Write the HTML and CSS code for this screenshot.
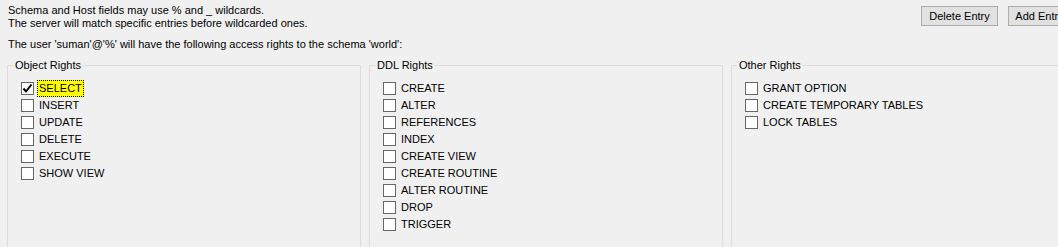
FILE: index.html
```html
<!DOCTYPE html>
<html lang="en">
<head>
  <meta charset="UTF-8">
  <title>Schema Privileges</title>
  <link rel="stylesheet" href="styles.css">
</head>
<body>
  <div class="page">
    <!-- Header: hints and entry buttons -->
    <div class="top">
      <div class="intro">
        <p class="hint">Schema and Host fields may use % and _ wildcards.<br>The server will match specific entries before wildcarded ones.</p>
        <p class="hint user-line">The user 'suman'@'%' will have the following access rights to the schema 'world':</p>
      </div>
      <div class="actions">
        <button class="btn">Delete Entry</button>
        <button class="btn btn-add">Add Entry</button>
      </div>
    </div>

    <!-- Rights groups -->
    <div class="groups">
      <fieldset class="group">
        <legend>Object Rights</legend>
        <ul class="rights">
          <li class="right"><span class="box checked"><svg width="11" height="11" viewBox="0 0 11 11"><path d="M1.5 5.5 L4 8.5 L9.5 1.5" fill="none" stroke="#000" stroke-width="2"/></svg></span><span class="label focused">SELECT</span></li>
          <li class="right"><span class="box"></span><span class="label">INSERT</span></li>
          <li class="right"><span class="box"></span><span class="label">UPDATE</span></li>
          <li class="right"><span class="box"></span><span class="label">DELETE</span></li>
          <li class="right"><span class="box"></span><span class="label">EXECUTE</span></li>
          <li class="right"><span class="box"></span><span class="label">SHOW VIEW</span></li>
        </ul>
      </fieldset>

      <fieldset class="group">
        <legend>DDL Rights</legend>
        <ul class="rights">
          <li class="right"><span class="box"></span><span class="label">CREATE</span></li>
          <li class="right"><span class="box"></span><span class="label">ALTER</span></li>
          <li class="right"><span class="box"></span><span class="label">REFERENCES</span></li>
          <li class="right"><span class="box"></span><span class="label">INDEX</span></li>
          <li class="right"><span class="box"></span><span class="label">CREATE VIEW</span></li>
          <li class="right"><span class="box"></span><span class="label">CREATE ROUTINE</span></li>
          <li class="right"><span class="box"></span><span class="label">ALTER ROUTINE</span></li>
          <li class="right"><span class="box"></span><span class="label">DROP</span></li>
          <li class="right"><span class="box"></span><span class="label">TRIGGER</span></li>
        </ul>
      </fieldset>

      <fieldset class="group">
        <legend>Other Rights</legend>
        <ul class="rights">
          <li class="right"><span class="box"></span><span class="label">GRANT OPTION</span></li>
          <li class="right"><span class="box"></span><span class="label">CREATE TEMPORARY TABLES</span></li>
          <li class="right"><span class="box"></span><span class="label">LOCK TABLES</span></li>
        </ul>
      </fieldset>
    </div>
  </div>
</body>
</html>
```

FILE: styles.css
```css
/* General Styles */
html, body {
  overflow: hidden;
}

body {
  margin: 0;
  font-family: "Liberation Sans", Arial, sans-serif;
  font-size: 11px;
  line-height: 13px;
  background-color: #f0f0f0;
  color: #000;
}

.page {
  width: 1093px;
}

/* Header */
.top {
  display: flex;
  padding: 0 8px;
}

.intro {
  flex: 1;
  padding-top: 4px;
}

.hint {
  margin: 0;
}

.user-line {
  margin-top: 8px;
}

.actions {
  display: flex;
  gap: 10px;
  padding-top: 6px;
}

.btn {
  width: 77px;
  height: 20px;
  padding: 0;
  font-family: inherit;
  font-size: 11px;
  color: #000;
  background-color: #e1e1e1;
  border: 1px solid #adadad;
  border-radius: 0;
}

.btn-add {
  padding-right: 14px;
}

/* Rights groups */
.groups {
  display: grid;
  grid-template-columns: 354px 354px 354px;
  column-gap: 8px;
  padding: 0 7px;
  margin-top: 8px;
}

.group {
  margin: 0;
  padding: 0 5px 0 5px;
  min-height: 200px;
  border: 1px solid #dcdcdc;
}

.group legend {
  padding: 0 2px;
  line-height: 13px;
}

.rights {
  list-style: none;
  margin: 8px 0 0 8px;
  padding: 0;
}

.right {
  display: flex;
  align-items: center;
  height: 17px;
}

.box {
  display: flex;
  align-items: center;
  justify-content: center;
  box-sizing: border-box;
  width: 13px;
  height: 13px;
  margin-right: 3px;
  background-color: #fff;
  border: 1px solid #666;
}

.label {
  padding: 1px 1px;
  border: 1px dotted transparent;
}

.label.focused {
  background-color: #ffff00;
  border-color: #000;
}
```
